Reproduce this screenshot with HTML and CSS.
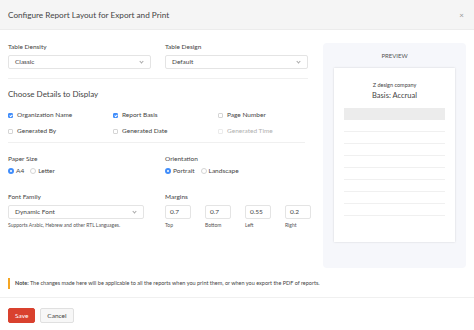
FILE: index.html
```html
<!DOCTYPE html>
<html lang="en">
<head>
  <meta charset="UTF-8" />
  <meta name="viewport" content="width=device-width, initial-scale=1.0"/>
  <title>Configure Report Layout</title>
  <link rel="stylesheet" href="styles.css">
</head>
<body>
  <div class="modal">

    <!-- Header -->
    <header class="modal-header">
      <h1>Configure Report Layout for Export and Print</h1>
      <span class="close">&times;</span>
    </header>

    <div class="modal-body">
      <div class="settings">

        <div class="row two-col">
          <div class="field">
            <label>Table Density</label>
            <div class="select">Classic<span class="caret"></span></div>
          </div>
          <div class="field">
            <label>Table Design</label>
            <div class="select">Default<span class="caret"></span></div>
          </div>
        </div>

        <hr class="divider" />

        <h2>Choose Details to Display</h2>
        <div class="checks">
          <span class="check on"><i></i>Organization Name</span>
          <span class="check on"><i></i>Report Basis</span>
          <span class="check"><i></i>Page Number</span>
          <span class="check"><i></i>Generated By</span>
          <span class="check"><i></i>Generated Date</span>
          <span class="check disabled"><i></i>Generated Time</span>
        </div>

        <hr class="divider short" />

        <div class="row two-col">
          <div class="field">
            <label>Paper Size</label>
            <div class="radios">
              <span class="radio on"><i></i>A4</span>
              <span class="radio"><i></i>Letter</span>
            </div>
          </div>
          <div class="field">
            <label>Orientation</label>
            <div class="radios">
              <span class="radio on"><i></i>Portrait</span>
              <span class="radio"><i></i>Landscape</span>
            </div>
          </div>
        </div>

        <div class="row two-col font-row">
          <div class="field">
            <label>Font Family</label>
            <div class="select narrow">Dynamic Font<span class="caret"></span></div>
            <p class="help">Supports Arabic, Hebrew and other RTL Languages.</p>
          </div>
          <div class="field">
            <label>Margins</label>
            <div class="margins">
              <div class="margin"><div class="box">0.7</div><small>Top</small></div>
              <div class="margin"><div class="box">0.7</div><small>Bottom</small></div>
              <div class="margin"><div class="box">0.55</div><small>Left</small></div>
              <div class="margin"><div class="box">0.2</div><small>Right</small></div>
            </div>
          </div>
        </div>
      </div>

      <!-- Preview -->
      <aside class="preview">
        <div class="preview-title">PREVIEW</div>
        <div class="page">
          <div class="org">Z design company</div>
          <div class="basis">Basis: Accrual</div>
          <div class="thead"></div>
          <div class="line"></div>
          <div class="line"></div>
          <div class="line"></div>
          <div class="line"></div>
          <div class="line"></div>
          <div class="line"></div>
          <div class="line"></div>
          <div class="line"></div>
        </div>
      </aside>
    </div>

    <div class="note">
      <b>Note:</b> The changes made here will be applicable to all the reports when you print them, or when you export the PDF of reports.
    </div>

    <footer class="modal-footer">
      <button class="btn primary">Save</button>
      <button class="btn">Cancel</button>
    </footer>
  </div>
</body>
</html>
```

FILE: styles.css
```css
body {
  font-family: Lato, 'Liberation Sans', sans-serif;
  margin: 0;
  background: #fff;
  color: #444;
}

.modal {
  width: 474px;
  height: 330px;
  overflow: hidden;
}

.modal-header {
  height: 29px;
  background: #f5f5f5;
  border-bottom: 1px solid #ececec;
  display: flex;
  align-items: center;
  justify-content: space-between;
  padding: 0 8px;
}

.modal-header h1 {
  font-size: 8.2px;
  font-weight: normal;
  margin: 0;
  color: #444;
}

.close {
  font-size: 8px;
  color: #999;
  margin-right: 2px;
}

.modal-body {
  display: flex;
  gap: 15px;
  padding: 13px 8px 0 8px;
}

.settings {
  width: 300px;
}

.two-col {
  display: grid;
  grid-template-columns: 143px 143px;
  gap: 14px;
}

.field label {
  display: block;
  font-size: 6.5px;
  line-height: 8px;
  margin: 0 0 4px;
  color: #444;
}

.select {
  position: relative;
  height: 14px;
  border: 1px solid #e4e4e4;
  border-radius: 2px;
  box-sizing: border-box;
  font-size: 6.5px;
  line-height: 12px;
  padding-left: 6px;
  color: #444;
}

.select.narrow {
  width: 136px;
}

.caret {
  position: absolute;
  right: 7px;
  top: 4px;
  width: 2px;
  height: 2px;
  border-right: 1px solid #aaa;
  border-bottom: 1px solid #aaa;
  transform: rotate(45deg);
}

.divider {
  border: none;
  border-top: 1px solid #f0f0f0;
  margin: 9px 0 10px;
}

.divider.short {
  width: 297px;
  margin: 7px 0 12px;
}

h2 {
  font-size: 8px;
  font-weight: normal;
  margin: 0 0 12px;
  color: #444;
  line-height: 10px;
}

.checks {
  display: grid;
  grid-template-columns: 105px 105px 90px;
  row-gap: 8px;
}

.check, .radio {
  display: flex;
  align-items: center;
  font-size: 6.5px;
  line-height: 8px;
  color: #444;
}

.check i {
  display: inline-block;
  width: 5px;
  height: 5px;
  border: 1px solid #d5d5d5;
  border-radius: 1px;
  margin-right: 4px;
  box-sizing: border-box;
}

.check.on i {
  background: #408dfb;
  border-color: #408dfb;
  position: relative;
}

.check.on i::after {
  content: '';
  position: absolute;
  left: 1px;
  top: 0;
  width: 1px;
  height: 2px;
  border-right: 1px solid #fff;
  border-bottom: 1px solid #fff;
  transform: rotate(45deg);
}

.check.disabled {
  color: #b0b0b0;
}

.check.disabled i {
  border-color: #ebebeb;
}

.radios {
  display: flex;
  gap: 6px;
}

.radio i {
  display: inline-block;
  width: 6px;
  height: 6px;
  border: 1px solid #d5d5d5;
  border-radius: 50%;
  margin-right: 2px;
  box-sizing: border-box;
}

.radio.on i {
  border: 2px solid #408dfb;
  background: #fff;
}

.font-row {
  margin-top: 18px;
}

.help {
  font-size: 5px;
  margin: 3px 0 0;
  color: #555;
}

.margins {
  display: flex;
  gap: 14px;
}

.margin .box {
  width: 26px;
  height: 14px;
  border: 1px solid #e4e4e4;
  border-radius: 2px;
  box-sizing: border-box;
  font-size: 6.5px;
  line-height: 12px;
  padding-left: 4px;
}

.margin small {
  display: block;
  font-size: 5px;
  margin-top: 3px;
  color: #555;
}

.preview {
  width: 143px;
  height: 225px;
  background: #f6f7fb;
  border-radius: 4px;
  box-sizing: border-box;
  padding: 9px 11px 0;
}

.preview-title {
  text-align: center;
  font-size: 6px;
  line-height: 8px;
  color: #555;
  margin-bottom: 8px;
}

.page {
  height: 174px;
  background: #fff;
  box-shadow: 0 0 2px rgba(0, 0, 0, 0.15);
  padding: 14px 10px 0;
  box-sizing: border-box;
}

.org {
  text-align: center;
  font-size: 5.5px;
  line-height: 7px;
  color: #444;
}

.basis {
  text-align: center;
  font-size: 7.5px;
  line-height: 9px;
  margin-top: 2px;
  color: #444;
}

.thead {
  height: 12px;
  background: #ececec;
  margin-top: 8px;
}

.line {
  height: 11px;
  border-bottom: 1px solid #f0f0f0;
}

.note {
  margin: 10px 8px 0;
  border-left: 2px solid #f5a623;
  padding-left: 5px;
  font-size: 5.5px;
  line-height: 11px;
  color: #444;
}

.modal-footer {
  border-top: 1px solid #f0f0f0;
  margin-top: 8px;
  padding: 10px 8px;
  display: flex;
  gap: 5px;
}

.btn {
  height: 15px;
  padding: 0 6px;
  font-family: Lato, 'Liberation Sans', sans-serif;
  font-size: 6.5px;
  border: 1px solid #e0e0e0;
  border-radius: 2px;
  background: #f7f7f7;
  color: #444;
}

.btn.primary {
  background: #d9412e;
  border-color: #d9412e;
  color: #fff;
}
```
